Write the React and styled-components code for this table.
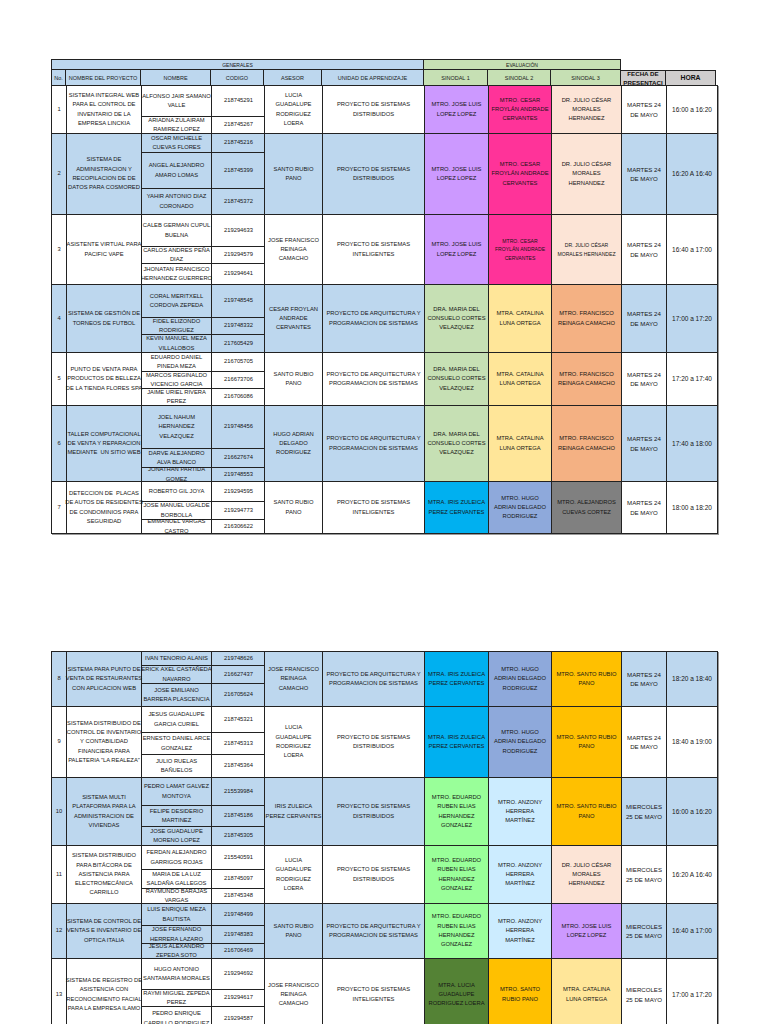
import React from 'react';
import styled, { createGlobalStyle } from 'styled-components';

const W = { no: 15, project: 75, name: 70, code: 53, asesor: 58, unidad: 102, s1: 64, s2: 63, s3: 70, fecha: 45, hora: 50 };

const C = {
  blue: '#bdd7ee',
  sage: '#c6e0b4',
  head: '#d0cece',
  purple: '#cc99ff',
  pink: '#ff3399',
  peach: '#fce4d6',
  yellow: '#ffe699',
  orange: '#f4b183',
  cyan: '#00b0f0',
  lavender: '#8ea9db',
  gray: '#808080',
  gold: '#ffc000',
  mint: '#99ff99',
  ice: '#ccecff',
  forest: '#548235',
};

const LOPEZ = ['MTRO. JOSE LUIS\nLOPEZ LOPEZ', C.purple];
const ANDRADE = ['MTRO. CESAR\nFROYLÁN ANDRADE\nCERVANTES', C.pink];
const MORALES = ['DR. JULIO CÉSAR\nMORALES\nHERNANDEZ', C.peach];
const CORTES = ['DRA. MARIA DEL\nCONSUELO CORTES\nVELAZQUEZ', C.sage];
const LUNA = ['MTRA. CATALINA\nLUNA ORTEGA', C.yellow];
const REINAGA = ['MTRO. FRANCISCO\nREINAGA CAMACHO', C.orange];
const IRIS = ['MTRA. IRIS ZULEICA\nPEREZ CERVANTES', C.cyan];
const HUGO = ['MTRO. HUGO\nADRIAN DELGADO\nRODRIGUEZ', C.lavender];
const SANTO = ['MTRO. SANTO RUBIO\nPANO', C.gold];
const ELIAS = ['MTRO. EDUARDO\nRUBEN ELIAS\nHERNANDEZ\nGONZALEZ', C.mint];
const ANZONY = ['MTRO. ANZONY\nHERRERA\nMARTÍNEZ', C.ice];

const DIST = 'PROYECTO DE SISTEMAS\nDISTRIBUIDOS';
const INTEL = 'PROYECTO DE SISTEMAS\nINTELIGENTES';
const ARQ = 'PROYECTO DE ARQUITECTURA Y\nPROGRAMACION DE SISTEMAS';
const MARTES = 'MARTES 24\nDE MAYO';
const MIERCOLES = 'MIERCOLES\n25 DE MAYO';
const LUCIA = 'LUCIA\nGUADALUPE\nRODRIGUEZ\nLOERA';
const RUBIO = 'SANTO RUBIO\nPANO';
const JFR = 'JOSE FRANCISCO\nREINAGA\nCAMACHO';

const firstPage = [
  {
    no: 1, project: 'SISTEMA INTEGRAL WEB\nPARA EL CONTROL DE\nINVENTARIO DE LA\nEMPRESA LINCKIA',
    members: [['ALFONSO JAIR SAMANO\nVALLE', '218745291', 30], ['ARIADNA ZULAIRAM\nRAMIREZ LOPEZ', '218745267', 17]],
    asesor: LUCIA, unidad: DIST, sinodales: [LOPEZ, ANDRADE, MORALES], fecha: MARTES, hora: '16:00 a 16:20',
  },
  {
    no: 2, project: 'SISTEMA DE\nADMINISTRACION Y\nRECOPILACION DE DE\nDATOS PARA COSMORED',
    members: [['OSCAR MICHELLE\nCUEVAS FLORES', '218745216', 18], ['ANGEL ALEJANDRO\nAMARO LOMAS', '218745399', 36], ['YAHIR ANTONIO DIAZ\nCORONADO', '218745372', 27]],
    asesor: RUBIO, unidad: DIST, sinodales: [LOPEZ, ANDRADE, MORALES], fecha: MARTES, hora: '16:20 A 16:40',
  },
  {
    no: 3, project: 'ASISTENTE VIRTUAL PARA\nPACIFIC VAPE',
    members: [['CALEB GERMAN CUPUL\nBUELNA', '219294633', 31], ['CARLOS ANDRES PEÑA\nDIAZ', '219294579', 17], ['JHONATAN FRANCISCO\nHERNANDEZ GUERRERO', '219294641', 22]],
    asesor: JFR, unidad: INTEL,
    sinodales: [LOPEZ, [ANDRADE[0], C.pink, 5.1], ['DR. JULIO CÉSAR\nMORALES HERNANDEZ', C.peach, 5.1]],
    fecha: MARTES, hora: '16:40 a 17:00',
  },
  {
    no: 4, project: 'SISTEMA DE GESTIÓN DE\nTORNEOS DE FUTBOL',
    members: [['CORAL MERITXELL\nCORDOVA ZEPEDA', '219748545', 32], ['FIDEL ELIZONDO\nRODRIGUEZ', '219748332', 17], ['KEVIN MANUEL MEZA\nVILLALOBOS', '217605429', 19]],
    asesor: 'CESAR FROYLAN\nANDRADE\nCERVANTES', unidad: ARQ, sinodales: [CORTES, LUNA, REINAGA], fecha: MARTES, hora: '17:00 a 17:20',
  },
  {
    no: 5, project: 'PUNTO DE VENTA PARA\nPRODUCTOS DE BELLEZA\nDE LA TIENDA FLORES SPA',
    members: [['EDUARDO DANIEL\nPINEDA MEZA', '216705705', 18], ['MARCOS REGINALDO\nVICENCIO GARCIA', '216673706', 17], ['JAIME URIEL RIVERA\nPEREZ', '216706086', 18]],
    asesor: RUBIO, unidad: ARQ, sinodales: [CORTES, LUNA, REINAGA], fecha: MARTES, hora: '17:20 a 17:40',
  },
  {
    no: 6, project: 'TALLER COMPUTACIONAL\nDE VENTA Y REPARACION\nMEDIANTE  UN SITIO WEB',
    members: [['JOEL NAHUM\nHERNANDEZ\nVELAZQUEZ', '219748456', 42], ['DARVE ALEJANDRO\nALVA BLANCO', '216627674', 19], ['JONATHAN PARTIDA\nGOMEZ', '219748553', 15]],
    asesor: 'HUGO ADRIAN\nDELGADO\nRODRIGUEZ', unidad: ARQ, sinodales: [CORTES, LUNA, REINAGA], fecha: MARTES, hora: '17:40 a 18:00',
  },
  {
    no: 7, project: 'DETECCION DE  PLACAS\nDE AUTOS DE RESIDENTES\nDE CONDOMINIOS PARA\nSEGURIDAD',
    members: [['ROBERTO GIL JOYA', '219294595', 19], ['JOSE MANUEL UGALDE\nBORBOLLA', '219294773', 18], ['EMMANUEL VARGAS\nCASTRO', '216306622', 15]],
    asesor: RUBIO, unidad: INTEL, sinodales: [IRIS, HUGO, ['MTRO. ALEJANDROS\nCUEVAS CORTEZ', C.gray]], fecha: MARTES, hora: '18:00 a 18:20',
  },
];

const secondPage = [
  {
    no: 8, project: 'SISTEMA PARA PUNTO DE\nVENTA DE RESTAURANTES\nCON APLICACION WEB',
    members: [['IVAN TENORIO ALANIS', '219748626', 13], ['ERICK AXEL CASTAÑEDA\nNAVARRO', '216627437', 18], ['JOSE EMILIANO\nBARRERA PLASCENCIA', '216705624', 23]],
    asesor: JFR, unidad: ARQ, sinodales: [IRIS, HUGO, SANTO], fecha: MARTES, hora: '18:20 a 18:40',
  },
  {
    no: 9, project: 'SISTEMA DISTRIBUIDO DE\nCONTROL DE INVENTARIO\nY CONTABILIDAD\nFINANCIERA PARA\nPALETERIA "LA REALEZA"',
    members: [['JESUS GUADALUPE\nGARCIA CURIEL', '218745321', 25], ['ERNESTO DANIEL ARCE\nGONZALEZ', '218745313', 22], ['JULIO RUELAS\nBAÑUELOS', '218745364', 24]],
    asesor: LUCIA, unidad: DIST, sinodales: [IRIS, HUGO, SANTO], fecha: MARTES, hora: '18:40 a 19:00',
  },
  {
    no: 10, project: 'SISTEMA MULTI\nPLATAFORMA PARA LA\nADMINISTRACION DE\nVIVIENDAS',
    members: [['PEDRO LAMAT GALVEZ\nMONTOYA', '215539984', 27], ['FELIPE DESIDERIO\nMARTINEZ', '218745186', 21], ['JOSE GUADALUPE\nMORENO LOPEZ', '218745305', 20]],
    asesor: 'IRIS ZULEICA\nPEREZ CERVANTES', unidad: DIST, sinodales: [ELIAS, ANZONY, SANTO], fecha: MIERCOLES, hora: '16:00 a 16:20',
  },
  {
    no: 11, project: 'SISTEMA DISTRIBUIDO\nPARA BITÁCORA DE\nASISTENCIA PARA\nELECTROMECÁNICA\nCARRILLO',
    members: [['FERDAN ALEJANDRO\nGARRIGOS ROJAS', '215540591', 23], ['MARIA DE LA LUZ\nSALDAÑA GALLEGOS', '218745097', 19], ['RAYMUNDO BARAJAS\nVARGAS', '218745348', 16]],
    asesor: LUCIA, unidad: DIST, sinodales: [ELIAS, ANZONY, MORALES], fecha: MIERCOLES, hora: '16:20 A 16:40',
  },
  {
    no: 12, project: 'SISTEMA DE CONTROL DE\nVENTAS E INVENTARIO DE\nOPTICA ITALIA',
    members: [['LUIS ENRIQUE MEZA\nBAUTISTA', '219748499', 21], ['JOSE FERNANDO\nHERRERA LAZARO', '219748383', 18], ['JESUS ALEXANDRO\nZEPEDA SOTO', '216706469', 16]],
    asesor: RUBIO, unidad: ARQ, sinodales: [ELIAS, ANZONY, LOPEZ], fecha: MIERCOLES, hora: '16:40 a 17:00',
  },
  {
    no: 13, project: 'SISTEMA DE REGISTRO DE\nASISTENCIA CON\nRECONOCIMIENTO FACIAL\nPARA LA EMPRESA ILAMO',
    members: [['HUGO ANTONIO\nSANTAMARIA MORALES', '219294692', 30], ['RAYMI MIGUEL ZEPEDA\nPEREZ', '219294617', 17], ['PEDRO ENRIQUE\nCARRILLO RODRIGUEZ', '219294587', 25]],
    asesor: JFR, unidad: INTEL,
    sinodales: [['MTRA. LUCIA\nGUADALUPE\nRODRIGUEZ LOERA', C.forest], ['MTRO. SANTO\nRUBIO PANO', C.gold], LUNA],
    fecha: MIERCOLES, hora: '17:00 a 17:20',
  },
];

const ProjectRow = ({ p }) => {
  const shade = p.no % 2 === 0 ? C.blue : '#fff';
  const total = p.members.reduce((s, m) => s + m[2], 0);
  return (
    <Row $bg={shade} $h={total}>
      <Cell $w={W.no}>{p.no}</Cell>
      <Cell $w={W.project}>{p.project}</Cell>
      <Members>
        {p.members.map(([name, code, h]) => (
          <Member key={code} $h={h}>
            <Cell $w={W.name}>{name}</Cell>
            <Cell $w={W.code} $size={5.8}>{code}</Cell>
          </Member>
        ))}
      </Members>
      <Cell $w={W.asesor}>{p.asesor}</Cell>
      <Cell $w={W.unidad}>{p.unidad}</Cell>
      {p.sinodales.map(([text, bg, size], i) => (
        <Cell key={i} $w={[W.s1, W.s2, W.s3][i]} $bg={bg} $size={size}>{text}</Cell>
      ))}
      <Cell $w={W.fecha} $size={6.1}>{p.fecha}</Cell>
      <Cell $w={W.hora} $size={6.5}>{p.hora}</Cell>
    </Row>
  );
};

const App = () => {
  return (
    <Page>
      <GlobalStyle />
      <Sheet>
        <Band>
          <BandCell $w={W.no + W.project + W.name + W.code + W.asesor + W.unidad} $bg={C.blue}>GENERALES</BandCell>
          <BandCell $w={W.s1 + W.s2 + W.s3} $bg={C.sage}>EVALUACIÓN</BandCell>
        </Band>
        <HeadRow>
          <HeadCell $w={W.no}>No.</HeadCell>
          <HeadCell $w={W.project}>NOMBRE DEL PROYECTO</HeadCell>
          <HeadCell $w={W.name}>NOMBRE</HeadCell>
          <HeadCell $w={W.code}>CODIGO</HeadCell>
          <HeadCell $w={W.asesor}>ASESOR</HeadCell>
          <HeadCell $w={W.unidad}>UNIDAD DE APRENDIZAJE</HeadCell>
          <HeadCell $w={W.s1} $bg={C.sage}>SINODAL 1</HeadCell>
          <HeadCell $w={W.s2} $bg={C.sage}>SINODAL 2</HeadCell>
          <HeadCell $w={W.s3} $bg={C.sage}>SINODAL 3</HeadCell>
          <HeadCell $w={W.fecha} $bg={C.head} $bold $top>{'FECHA DE\nPRESENTACI'}</HeadCell>
          <HeadCell $w={W.hora} $bg={C.head} $bold $top $big>HORA</HeadCell>
        </HeadRow>
        <Block>
          {firstPage.map(p => <ProjectRow key={p.no} p={p} />)}
        </Block>
      </Sheet>
      <Sheet $gap>
        <Block>
          {secondPage.map(p => <ProjectRow key={p.no} p={p} />)}
        </Block>
      </Sheet>
    </Page>
  );
};

export default App;

const GlobalStyle = createGlobalStyle`
  html, body {
    margin: 0;
    padding: 0;
    background: #fff;
  }
  body {
    font-family: "Liberation Sans", Arial, sans-serif;
    color: #161616;
  }
`;

const Page = styled.div`
  width: 768px;
  height: 1024px;
  overflow: hidden;
  padding: 59px 0 0 51px;
  box-sizing: border-box;
`;

const Sheet = styled.div`
  display: flex;
  flex-direction: column;
  width: fit-content;
  margin-top: ${p => (p.$gap ? '117px' : '0')};
`;

const Band = styled.div`
  display: flex;
  height: 11px;
`;

const BandCell = styled.div`
  width: ${p => p.$w}px;
  box-sizing: border-box;
  background: ${p => p.$bg};
  border-top: 1.5px solid #222;
  border-bottom: 1px solid #222;
  border-right: 1px solid #222;
  &:first-child { border-left: 1.5px solid #222; }
  font-size: 5px;
  display: flex;
  align-items: center;
  justify-content: center;
`;

const HeadRow = styled.div`
  display: flex;
  height: 15px;
`;

const HeadCell = styled.div`
  width: ${p => p.$w}px;
  flex: none;
  box-sizing: border-box;
  background: ${p => p.$bg || C.blue};
  border-left: ${p => (p.$w === W.no ? '1.5px solid #222' : 'none')};
  border-right: 1px solid #222;
  border-top: ${p => (p.$top ? '1px solid #222' : 'none')};
  display: flex;
  align-items: center;
  justify-content: center;
  text-align: center;
  white-space: pre;
  overflow: hidden;
  font-weight: ${p => (p.$bold ? 700 : 400)};
  font-size: ${p => (p.$big ? '6.8px' : p.$bold ? '6.2px' : '5.5px')};
  line-height: ${p => (p.$bold ? '9.5px' : '8px')};
  color: ${p => (p.$bold ? '#111' : '#1c1c1c')};
`;

const Block = styled.div`
  display: flex;
  flex-direction: column;
  border-left: 1.5px solid #222;
  border-right: 1.5px solid #222;
  border-bottom: 1.5px solid #222;
  border-top: 1px solid #222;
  box-shadow: 1px 1px 0 #999;
`;

const Row = styled.div`
  display: flex;
  height: ${p => p.$h}px;
  box-sizing: border-box;
  background: ${p => p.$bg};
  & + & { border-top: 1px solid #222; }
`;

const Cell = styled.div`
  width: ${p => p.$w}px;
  flex: none;
  box-sizing: border-box;
  background: ${p => p.$bg || 'transparent'};
  border-right: 1px solid #222;
  &:last-child { border-right: none; }
  display: flex;
  align-items: center;
  justify-content: center;
  text-align: center;
  white-space: pre;
  font-size: ${p => p.$size || 5.8}px;
  line-height: ${p => (p.$size && p.$size < 5.5 ? '8.4px' : '9.3px')};
`;

const Members = styled.div`
  display: flex;
  flex-direction: column;
  flex: none;
  width: ${W.name + W.code}px;
  border-right: 1px solid #222;
  box-sizing: border-box;
`;

const Member = styled.div`
  display: flex;
  flex: 0 0 ${p => p.$h}px;
  min-height: 0;
  box-sizing: border-box;
  & + & { border-top: 1px solid #222; }
  &:last-child { flex: 1 1 0; }
  & > div:last-child { border-right: none; }
`;
